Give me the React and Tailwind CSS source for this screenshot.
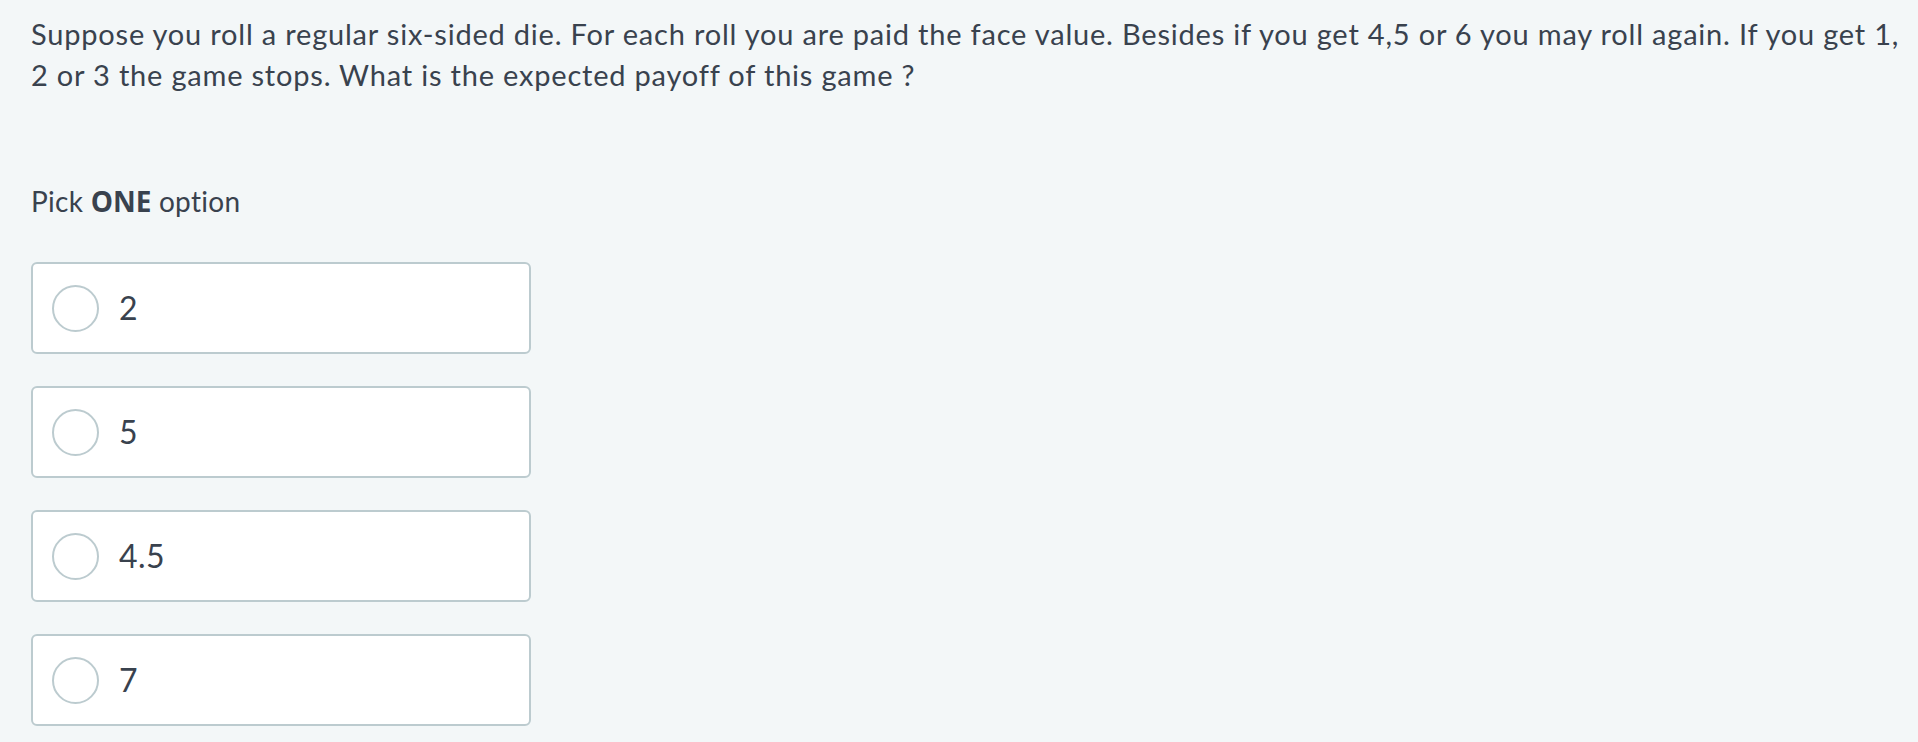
const options = ['2', '5', '4.5', '7'];

function Option({ label }) {
  return (
    <label className="flex items-center h-[92px] w-[500px] bg-white border-2 border-[#bccbcf] rounded-[6px] pl-[19px] cursor-pointer">
      <span className="w-[47px] h-[47px] rounded-full border-2 border-[#bccbcf] bg-white shrink-0" />
      <span className="ml-[20px] text-[32px] leading-none tracking-[0.5px]">{label}</span>
    </label>
  );
}

export default function App() {
  return (
    <div
      className="min-h-screen bg-[#f3f7f8] text-[#39424e] pl-[31px] pr-[8px] pt-[13px] pb-[17px]"
      style={{ fontFamily: 'Lato, "Open Sans", sans-serif' }}
    >
      {/* question */}
      <p className="text-[29px] leading-[41px] tracking-[0.8px]">
        Suppose you roll a regular six-sided die. For each roll you are paid the face value. Besides if you get 4,5 or 6 you may roll again. If you get 1, 2 or 3 the game stops. What is the expected payoff of this game ?
      </p>

      <p className="mt-[86px] text-[28px] leading-[41px] tracking-[0.3px]">
        Pick <strong className="font-bold tracking-normal" style={{ fontFamily: '"Open Sans", sans-serif' }}>ONE</strong> option
      </p>

      {/* options */}
      <div className="mt-[40px] flex flex-col gap-[32px]">
        {options.map(o => (
          <Option key={o} label={o} />
        ))}
      </div>
    </div>
  );
}
